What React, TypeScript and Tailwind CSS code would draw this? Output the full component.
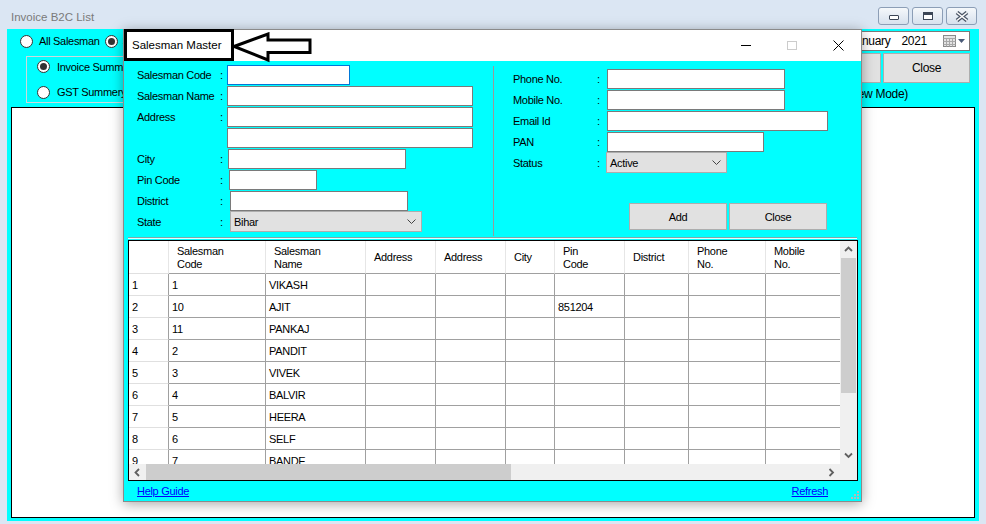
import React from 'react';

type Kids = { children?: React.ReactNode };

const Radio = ({ checked = false }: { checked?: boolean }) => (
  <span className="flex h-[13px] w-[13px] shrink-0 items-center justify-center rounded-full border border-[#333333] bg-white">
    {checked && <span className="h-[7px] w-[7px] rounded-full bg-[#333333]" />}
  </span>
);

const WinBtn = ({ children }: Kids) => (
  <div className="flex h-[18px] w-[31px] items-center justify-center rounded-[3px] border border-[#8c9eb6] bg-linear-to-b from-[#f5f8fb] to-[#d7e1ed]">
    {children}
  </div>
);

const Chevron = ({ dir }: { dir: 'up' | 'down' | 'left' | 'right' }) => {
  const pts = {
    up: '1,5 4.5,1.5 8,5',
    down: '1,1.5 4.5,5 8,1.5',
    left: '5,1 1.5,4.5 5,8',
    right: '1.5,1 5,4.5 1.5,8',
  }[dir];
  const vertical = dir === 'up' || dir === 'down';
  return (
    <svg width={vertical ? 9 : 7} height={vertical ? 7 : 9}>
      <polyline points={pts} fill="none" stroke="#606060" strokeWidth="1.8" />
    </svg>
  );
};

const SelectChevron = () => (
  <svg width="9" height="5">
    <polyline points="0.5,0.5 4.5,4.5 8.5,0.5" fill="none" stroke="#444" strokeWidth="1" />
  </svg>
);

// label row for the salesman form
const Row = ({ label, labelW, colonW, children }: Kids & { label: string; labelW: string; colonW: string }) => (
  <div className="flex h-[21px] items-center">
    <span className={`${labelW} shrink-0 pt-[2px]`}>{label}</span>
    <span className={`${colonW} shrink-0 pt-[2px]`}>{label ? ':' : ''}</span>
    {children}
  </div>
);

const Box = ({ className = '' }: { className?: string }) => (
  <div className={`h-[20px] border border-[#7a7a7a] bg-white ${className}`} />
);

const cols = [
  { w: 'w-[40px]', h: [''] },
  { w: 'w-[97px]', h: ['Salesman', 'Code'] },
  { w: 'w-[100px]', h: ['Salesman', 'Name'] },
  { w: 'w-[70px]', h: ['Address'] },
  { w: 'w-[70px]', h: ['Address'] },
  { w: 'w-[49px]', h: ['City'] },
  { w: 'w-[70px]', h: ['Pin', 'Code'] },
  { w: 'w-[64px]', h: ['District'] },
  { w: 'w-[77px]', h: ['Phone', 'No.'] },
  { w: 'w-[74px]', h: ['Mobile', 'No.'] },
];

const rows = [
  ['1', 'VIKASH', ''],
  ['10', 'AJIT', '851204'],
  ['11', 'PANKAJ', ''],
  ['2', 'PANDIT', ''],
  ['3', 'VIVEK', ''],
  ['4', 'BALVIR', ''],
  ['5', 'HEERA', ''],
  ['6', 'SELF', ''],
  ['7', 'BANDE', ''],
];

export default function App() {
  return (
    <div className="relative h-[524px] w-[986px] overflow-hidden bg-[#dbe6f3] font-['Liberation_Sans',Arial,sans-serif] text-[11px] tracking-[-0.3px] text-black">
      {/* outer window caption */}
      <div className="flex h-[29px] items-start justify-between">
        <span className="ml-[11px] mt-[10px] text-[11.5px] leading-[14px] tracking-normal text-[#7a7a7a]">Invoice B2C List</span>
        <div className="mr-[9px] mt-[7px] flex gap-[3px]">
          <WinBtn>
            <div className="mt-[3px] h-[5px] w-[10px] rounded-[1px] border border-[#3c4656] bg-white" />
          </WinBtn>
          <WinBtn>
            <div className="h-[8px] w-[10px] border border-t-[3px] border-[#3c4656] bg-white" />
          </WinBtn>
          <WinBtn>
            <svg width="14" height="11">
              <path d="M2,1.5 L12,9.5 M12,1.5 L2,9.5" stroke="#4a5566" strokeWidth="4" />
              <path d="M2,1.5 L12,9.5 M12,1.5 L2,9.5" stroke="#ffffff" strokeWidth="1.6" />
            </svg>
          </WinBtn>
        </div>
      </div>

      {/* outer client area */}
      <div className="mx-[7px] flex h-[492px] flex-col bg-[#00ffff]">
        <div className="flex h-[78px] justify-between">
          <div className="flex flex-col">
            <div className="ml-[13px] mt-[5px] flex h-[14px] items-center">
              <Radio />
              <span className="ml-[6px]">All Salesman</span>
              <span className="ml-[5px]">
                <Radio checked />
              </span>
              <span className="ml-[5px]">S</span>
            </div>
            <div className="ml-[19px] mt-[8px] flex h-[47px] w-[320px] flex-col justify-center gap-[9px] border border-[#cfd8dc] pl-[10px]">
              <div className="flex items-center">
                <Radio checked />
                <span className="ml-[7px]">Invoice Summery</span>
              </div>
              <div className="flex items-center">
                <Radio />
                <span className="ml-[7px]">GST Summery</span>
              </div>
            </div>
          </div>
          <div className="mr-[9px] flex flex-col items-end">
            <div className="mt-[2px] flex h-[20px] w-[125px] items-center justify-end border border-[#7a7a7a] bg-white pr-[4px] text-[12px]">
              <span>January</span>
              <span className="ml-[11px]">2021</span>
              <svg className="ml-[16px]" width="13" height="12">
                <rect x="0.5" y="0.5" width="12" height="11" fill="#e4e4e4" stroke="#8a8a8a" />
                <path d="M0.5,3.5 H12.5 M0.5,6.5 H12.5 M0.5,9.5 H12.5 M3.5,3.5 V11.5 M6.5,3.5 V11.5 M9.5,3.5 V11.5" stroke="#a8a8a8" />
              </svg>
              <svg className="ml-[2px]" width="7" height="4">
                <polygon points="0,0 7,0 3.5,4" fill="#4a5a78" />
              </svg>
            </div>
            <div className="mt-[2px] flex gap-[2px]">
              <div className="flex h-[30px] w-[87px] items-center justify-center border border-[#adadad] bg-[#e1e1e1] text-[12px]">Show</div>
              <div className="flex h-[30px] w-[87px] items-center justify-center border border-[#adadad] bg-[#e1e1e1] text-[12px]">Close</div>
            </div>
            <span className="mr-[62px] mt-[4px] text-[12px] leading-[14px]">(Preview Mode)</span>
          </div>
        </div>
        <div className="mx-[4px] h-[411px] border border-black bg-white" />
      </div>

      {/* Salesman Master dialog */}
      <div className="absolute left-[123px] top-[29px] flex h-[473px] w-[739px] flex-col border border-[#8a8a8a] bg-white shadow-[0_2px_12px_rgba(0,0,0,0.35)]">
        <div className="flex h-[31px] shrink-0 justify-end bg-white">
          <div className="flex w-[46px] items-center justify-center">
            <div className="h-px w-[10px] bg-black" />
          </div>
          <div className="flex w-[46px] items-center justify-center">
            <div className="h-[9px] w-[10px] border border-[#cccccc]" />
          </div>
          <div className="flex w-[46px] items-center justify-center">
            <svg width="11" height="11">
              <path d="M0.5,0.5 L10.5,10.5 M10.5,0.5 L0.5,10.5" stroke="#000" strokeWidth="1" />
            </svg>
          </div>
        </div>

        {/* annotation: boxed caption + arrow */}
        <div className="absolute left-0 top-[-1px] flex h-[32px] w-[110px] items-center border-[3px] border-black bg-white pl-[5px] pt-[2px] text-[11.5px] tracking-normal">
          Salesman Master
        </div>
        <svg className="absolute left-[108px] top-[2px]" width="82" height="31">
          <polygon points="2,14.5 36,2 36,8 78,8 78,20.5 36,20.5 36,28" fill="#fff" stroke="#000" strokeWidth="3" strokeLinejoin="miter" />
        </svg>

        <div className="flex flex-1 flex-col bg-[#00ffff]">
          <div className="flex h-[176px] shrink-0">
            <div className="flex w-[369px] shrink-0 flex-col pl-[13px] pt-[3px]">
              <Row label="Salesman Code" labelW="w-[83px]" colonW="w-[7px]">
                <Box className="w-[123px] border-[#0078d7]" />
              </Row>
              <Row label="Salesman Name" labelW="w-[83px]" colonW="w-[7px]">
                <Box className="w-[246px]" />
              </Row>
              <Row label="Address" labelW="w-[83px]" colonW="w-[7px]">
                <Box className="w-[246px]" />
              </Row>
              <Row label="" labelW="w-[83px]" colonW="w-[7px]">
                <Box className="w-[246px]" />
              </Row>
              <Row label="City" labelW="w-[83px]" colonW="w-[8px]">
                <Box className="w-[178px]" />
              </Row>
              <Row label="Pin Code" labelW="w-[83px]" colonW="w-[9px]">
                <Box className="w-[88px]" />
              </Row>
              <Row label="District" labelW="w-[83px]" colonW="w-[10px]">
                <Box className="w-[178px]" />
              </Row>
              <Row label="State" labelW="w-[83px]" colonW="w-[10px]">
                <div className="flex h-[21px] w-[192px] items-center justify-between border border-[#adadad] bg-[#e1e1e1] pl-[3px] pr-[5px]">
                  <span className="pt-[2px]">Bihar</span>
                  <SelectChevron />
                </div>
              </Row>
            </div>
            <div className="mt-[5px] h-[170px] w-px bg-[#9a9a9a]" />
            <div className="flex flex-col pl-[19px] pt-[7px]">
              <Row label="Phone No." labelW="w-[84px]" colonW="w-[10px]">
                <Box className="w-[178px]" />
              </Row>
              <Row label="Mobile No." labelW="w-[84px]" colonW="w-[10px]">
                <Box className="w-[178px]" />
              </Row>
              <Row label="Email Id" labelW="w-[84px]" colonW="w-[10px]">
                <Box className="w-[221px]" />
              </Row>
              <Row label="PAN" labelW="w-[84px]" colonW="w-[10px]">
                <Box className="w-[157px]" />
              </Row>
              <Row label="Status" labelW="w-[84px]" colonW="w-[9px]">
                <div className="flex h-[21px] w-[121px] items-center justify-between border border-[#adadad] bg-[#e1e1e1] pl-[3px] pr-[5px]">
                  <span className="pt-[2px]">Active</span>
                  <SelectChevron />
                </div>
              </Row>
              <div className="ml-[116px] mt-[30px] flex gap-[2px]">
                <div className="flex h-[27px] w-[98px] items-center justify-center border border-[#adadad] bg-[#e1e1e1] pt-[1px]">Add</div>
                <div className="flex h-[27px] w-[98px] items-center justify-center border border-[#adadad] bg-[#e1e1e1] pt-[1px]">Close</div>
              </div>
            </div>
          </div>

          <div className="mx-[4px] h-[2px] shrink-0 border-t border-b border-t-[#7fa9a9] border-b-[#e0ffff]" />

          {/* grid */}
          <div className="ml-[4px] mt-px flex h-[241px] w-[730px] shrink-0 flex-col border border-black bg-white">
            <div className="flex h-[223px]">
              <div className="w-[711px] overflow-hidden">
                <div className="flex h-[33px]">
                  {cols.map((c, i) => (
                    <div
                      key={i}
                      className={`${c.w} flex shrink-0 flex-col justify-center border-b pt-[1px] leading-[13px] ${i === 0 ? 'border-b-[#e0e0e0]' : 'border-b-[#a0a0a0] pl-[8px]'} ${i < cols.length - 1 ? 'border-r border-r-[#e6e6e6]' : ''}`}
                    >
                      {c.h.map((t, k) => (
                        <span key={k}>{t}</span>
                      ))}
                    </div>
                  ))}
                </div>
                {rows.map((r, ri) => (
                  <div key={ri} className="flex h-[22px]">
                    {cols.map((c, i) => {
                      let txt = '';
                      if (i === 0) txt = String(ri + 1);
                      if (i === 1) txt = r[0];
                      if (i === 2) txt = r[1];
                      if (i === 6) txt = r[2];
                      return (
                        <div
                          key={i}
                          className={`${c.w} flex shrink-0 items-center border-b pl-[3px] pt-[1px] ${i === 0 ? 'border-b-[#e0e0e0]' : 'border-b-[#a0a0a0]'} ${i < cols.length - 1 ? 'border-r border-r-[#a0a0a0]' : ''}`}
                        >
                          {txt}
                        </div>
                      );
                    })}
                  </div>
                ))}
              </div>
              <div className="flex w-[17px] flex-col bg-[#f0f0f0]">
                <div className="flex h-[17px] items-center justify-center">
                  <Chevron dir="up" />
                </div>
                <div className="ml-px h-[135px] w-[15px] bg-[#cdcdcd]" />
                <div className="flex-1" />
                <div className="flex h-[17px] items-center justify-center">
                  <Chevron dir="down" />
                </div>
              </div>
            </div>
            <div className="flex h-[16px] bg-[#f0f0f0]">
              <div className="flex w-[17px] items-center justify-center">
                <Chevron dir="left" />
              </div>
              <div className="w-[365px] bg-[#cdcdcd]" />
              <div className="flex-1" />
              <div className="flex w-[17px] items-center justify-center">
                <Chevron dir="right" />
              </div>
              <div className="w-[17px]" />
            </div>
          </div>

          <div className="relative flex flex-1 items-center justify-between pl-[13px] pr-[33px] pt-[1px]">
            <span className="text-[#0000ff] underline">Help Guide</span>
            <span className="text-[#0000ff] underline">Refresh</span>
            <svg className="absolute bottom-[2px] right-[2px]" width="8" height="8">
              <rect x="6" y="0" width="2" height="2" fill="#b8b8b8" />
              <rect x="3" y="3" width="2" height="2" fill="#b8b8b8" />
              <rect x="6" y="3" width="2" height="2" fill="#b8b8b8" />
              <rect x="0" y="6" width="2" height="2" fill="#b8b8b8" />
              <rect x="3" y="6" width="2" height="2" fill="#b8b8b8" />
              <rect x="6" y="6" width="2" height="2" fill="#b8b8b8" />
            </svg>
          </div>
        </div>
      </div>
    </div>
  );
}
